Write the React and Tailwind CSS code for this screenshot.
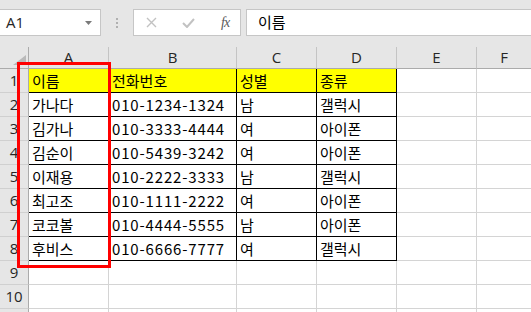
import React from "react";

const rows = [
  ["이름", "전화번호", "성별", "종류"],
  ["가나다", "010-1234-1324", "남", "갤럭시"],
  ["김가나", "010-3333-4444", "여", "아이폰"],
  ["김순이", "010-5439-3242", "여", "아이폰"],
  ["이재용", "010-2222-3333", "남", "갤럭시"],
  ["최고조", "010-1111-2222", "여", "아이폰"],
  ["코코볼", "010-4444-5555", "남", "아이폰"],
  ["후비스", "010-6666-7777", "여", "갤럭시"],
];

const cols = ["A", "B", "C", "D", "E", "F"];
const kfont = { fontFamily: '"Malgun Gothic", "Noto Sans CJK KR", sans-serif' };
const ufont = { fontFamily: '"Open Sans", "Noto Sans", sans-serif' };

export default function App() {
  const cells = [];
  cells.push(
    <div key="corner" className="h-[22px] bg-[#e6e6e6] border-r border-b border-[#ababab] relative">
      <svg className="absolute right-[2px] bottom-[3px]" width="15" height="10" viewBox="0 0 15 10">
        <polygon points="15,0 15,10 2,10" fill="#b9b9b9" />
      </svg>
    </div>
  );
  cols.forEach((c, i) => {
    cells.push(
      <div
        key={"h" + c}
        className={
          "h-[22px] bg-[#e6e6e6] border-b border-[#ababab] flex items-center justify-center text-[15px] text-[#262626] " +
          (i < 5 ? "border-r border-r-[#c4c4c4]" : "")
        }
        style={ufont}
      >
        {c}
      </div>
    );
  });
  for (let r = 1; r <= 11; r++) {
    cells.push(
      <div
        key={"r" + r}
        className="h-[24px] bg-[#e6e6e6] border-r border-r-[#ababab] border-b border-b-[#d0d0d0] flex items-center justify-center text-[15px] text-[#262626]"
        style={ufont}
      >
        {r <= 10 ? r : ""}
      </div>
    );
    for (let c = 0; c < 6; c++) {
      const inTable = r <= 8 && c < 4;
      const text = inTable ? rows[r - 1][c] : "";
      let cls =
        "h-[24px] border-r border-b flex items-center pl-[3px] pt-[1px] text-[15px] text-black whitespace-nowrap overflow-hidden ";
      cls += inTable ? "border-black " : "border-[#d4d4d4] ";
      if (c === 1 && r > 1 && r <= 8) cls += "tracking-[0.85px] ";
      cls += r === 1 && inTable ? "bg-[#ffff00]" : "bg-white";
      if (c === 5) cls += " border-r-0";
      cells.push(
        <div key={r + "-" + c} className={cls} style={kfont}>
          {text}
        </div>
      );
    }
  }

  return (
    <div className="relative w-[531px] h-[312px] overflow-hidden bg-[#e6e6e6]" style={kfont}>
      <div className="h-[47px] flex items-start pt-[9px]">
        <div className="w-[101px] h-[27px] bg-white border border-l-0 border-[#c6c6c6] flex items-center justify-between pl-[6px] pr-[8px]">
          <span className="text-[15px] text-[#262626]" style={ufont}>
            A1
          </span>
          <svg width="7" height="4" viewBox="0 0 7 4">
            <polygon points="0,0 7,0 3.5,4" fill="#7a7a7a" />
          </svg>
        </div>
        <div className="w-[32px] h-[27px] flex flex-col items-center justify-center gap-[2px]">
          <div className="w-[2px] h-[2px] bg-[#b0b0b0]" />
          <div className="w-[2px] h-[2px] bg-[#b0b0b0]" />
          <div className="w-[2px] h-[2px] bg-[#b0b0b0]" />
        </div>
        <div className="w-[108px] h-[27px] bg-white border border-[#c6c6c6] flex items-center">
          <svg className="ml-[12px]" width="11" height="11" viewBox="0 0 11 11">
            <path d="M1 1 L10 10 M10 1 L1 10" stroke="#c2c2c2" strokeWidth="1.4" />
          </svg>
          <svg className="ml-[25px]" width="13" height="10" viewBox="0 0 13 10">
            <path d="M1 5 L5 9 L12 1" stroke="#c2c2c2" strokeWidth="2" fill="none" />
          </svg>
          <span
            className="ml-[26px] text-[14px] italic text-[#5a5a5a] tracking-[-1px]"
            style={{ fontFamily: '"Liberation Serif", serif' }}
          >
            fx
          </span>
        </div>
        <div className="ml-[5px] flex-1 h-[27px] bg-white border border-r-0 border-[#c6c6c6] flex items-center pl-[11px] text-[15px] text-black">
          이름
        </div>
      </div>
      <div className="grid grid-cols-[29px_80px_128px_80px_80px_80px_1fr]">{cells}</div>
      <div className="absolute left-[17px] top-[62px] w-[94px] h-[206px] border-[3px] border-[#ff0000]" />
    </div>
  );
}
